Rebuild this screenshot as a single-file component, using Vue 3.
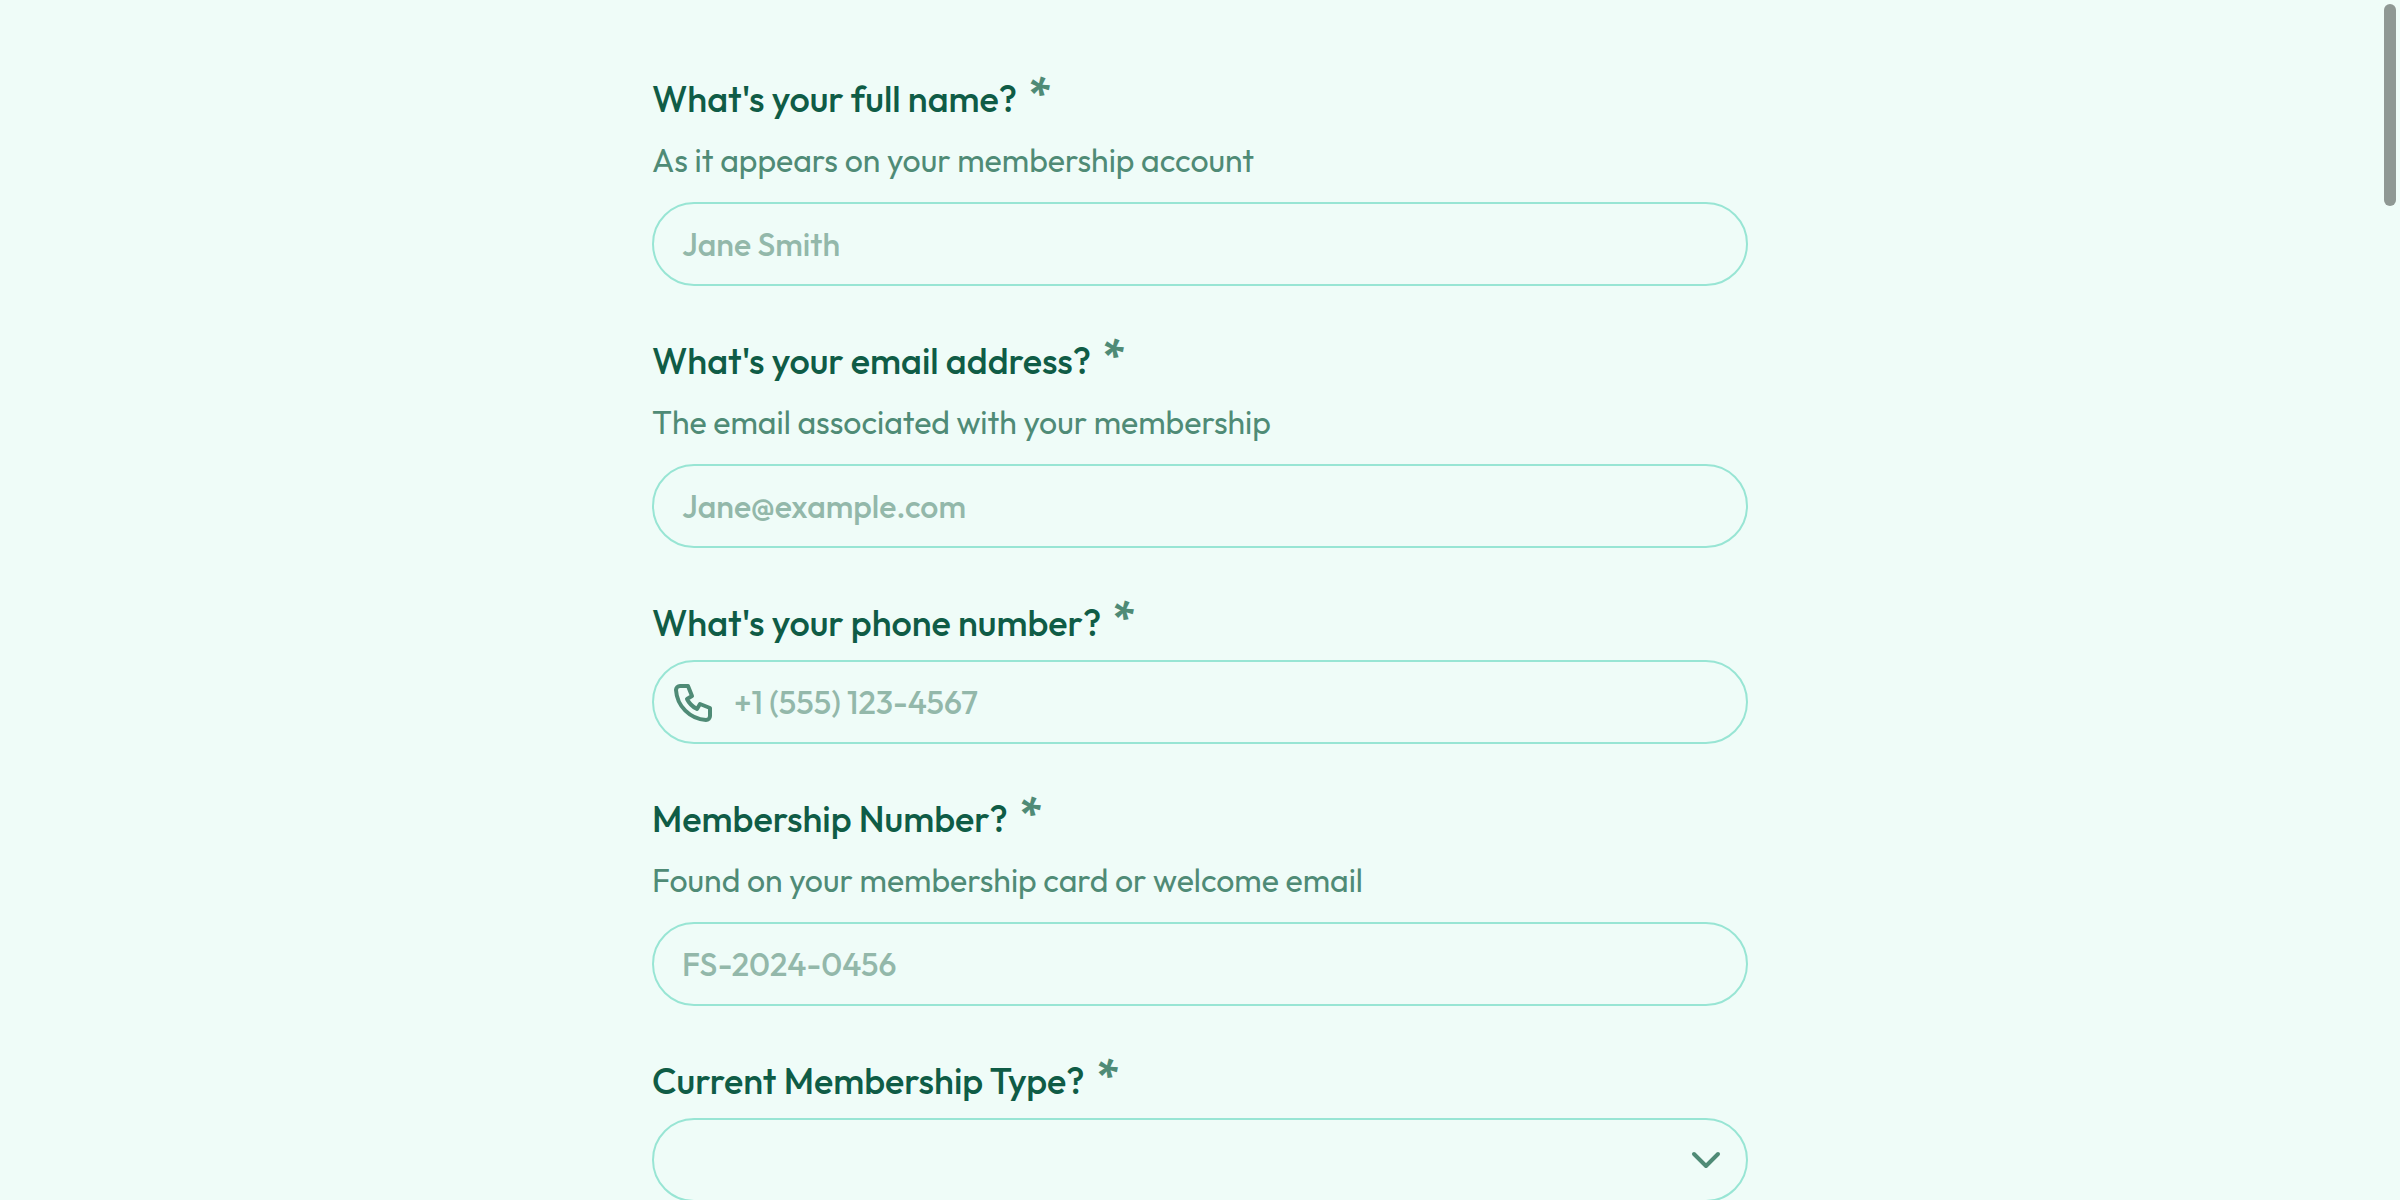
<script setup>
import { ref } from 'vue'

const fields = ref([
  { id: 'name', label: "What's your full name?", hint: 'As it appears on your membership account', type: 'text', placeholder: 'Jane Smith', value: '' },
  { id: 'email', label: "What's your email address?", hint: 'The email associated with your membership', type: 'email', placeholder: 'Jane@example.com', value: '' },
  { id: 'phone', label: "What's your phone number?", type: 'tel', placeholder: '+1 (555) 123-4567', value: '' },
  { id: 'number', label: 'Membership Number?', hint: 'Found on your membership card or welcome email', type: 'text', placeholder: 'FS-2024-0456', value: '' },
  { id: 'type', label: 'Current Membership Type?', type: 'select', value: '' },
])
</script>

<template>
  <main class="page">
    <form class="form" @submit.prevent>
      <div v-for="field in fields" :key="field.id" class="field">
        <label class="label" :for="field.id">
          {{ field.label }}<span class="required">*</span>
        </label>
        <p v-if="field.hint" :id="field.id + '-hint'" class="hint">{{ field.hint }}</p>
        <div class="control">
          <svg v-if="field.type === 'tel'" class="icon" viewBox="0 0 24 24" aria-hidden="true">
            <path d="M5 4h4l2 5l-2.5 1.5a11 11 0 0 0 5 5l1.5 -2.5l5 2v4a2 2 0 0 1 -2 2a16 16 0 0 1 -15 -15a2 2 0 0 1 2 -2" />
          </svg>
          <select v-if="field.type === 'select'" :id="field.id" v-model="field.value" class="input" required></select>
          <input
            v-else
            :id="field.id"
            v-model="field.value"
            class="input"
            :class="{ 'after-icon': field.type === 'tel' }"
            :type="field.type"
            :placeholder="field.placeholder"
            :aria-describedby="field.hint ? field.id + '-hint' : null"
            required
          />
          <svg v-if="field.type === 'select'" class="icon" viewBox="0 0 24 24" aria-hidden="true">
            <path d="M6 9l6 6l6 -6" />
          </svg>
        </div>
      </div>
    </form>
    <div class="scroll-thumb"></div>
  </main>
</template>

<style>
body {
  background: #effcf8;
}
</style>

<style scoped>
.page {
  height: 100vh;
  overflow: hidden;
  font-family: Outfit, Lato, sans-serif;
  color: #0f5c46;
}

.form {
  display: flex;
  flex-direction: column;
  gap: 52px;
  max-width: 1096px;
  margin: 0 auto;
  padding: 76px 24px;
}

.field {
  display: flex;
  flex-direction: column;
}

.label {
  display: flex;
  align-items: flex-start;
  gap: 10px;
  margin-bottom: 14px;
  font-size: 36px;
  font-weight: 500;
  line-height: 46px;
}

.required {
  color: #4f8b76;
  font-family: "Open Sans", sans-serif;
  font-size: 40px;
  font-weight: 700;
  line-height: 32px;
  transform: rotate(20deg);
}

.hint {
  margin: 0 0 18px;
  color: #4f8b76;
  font-size: 32px;
  line-height: 48px;
}

.control {
  display: flex;
  align-items: center;
  box-sizing: border-box;
  height: 84px;
  padding: 0 16px;
  border: 2px solid #98e5d4;
  border-radius: 42px;
}

.input {
  flex: 1;
  min-width: 0;
  height: 48px;
  padding: 0 12px;
  border: 0;
  outline: 0;
  appearance: none;
  background: transparent;
  color: inherit;
  font: 500 32px/48px Outfit, Lato, sans-serif;
}

.input.after-icon {
  padding-left: 16px;
}

.input::placeholder {
  color: #93b8aa;
  opacity: 1;
}

.icon {
  flex: none;
  width: 48px;
  height: 48px;
  fill: none;
  stroke: #4f8b76;
  stroke-width: 2;
  stroke-linecap: round;
  stroke-linejoin: round;
}

.scroll-thumb {
  position: fixed;
  top: 4px;
  right: 4px;
  width: 12px;
  height: 202px;
  border-radius: 6px;
  background: #8f9894;
}
</style>
